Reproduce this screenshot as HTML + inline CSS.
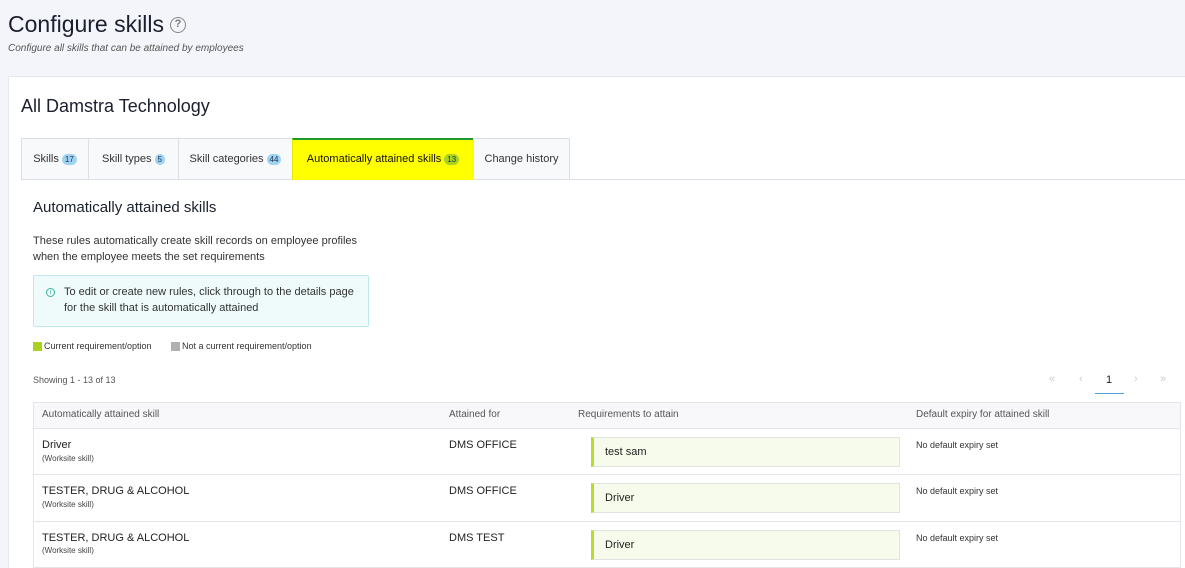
<!DOCTYPE html>
<html style="width:1185px;height:568px;overflow:hidden"><head><style>
*{margin:0;padding:0;box-sizing:border-box}
body{width:1185px;height:568px;overflow:hidden;background:#f4f5fa;font-family:"Liberation Sans",sans-serif;color:#222;position:relative}
.a{position:absolute;white-space:nowrap}
.card{position:absolute;left:8px;top:76px;width:1180px;height:492px;background:#fff;border:1px solid #e6e8ee;border-bottom:none}
.tab{position:absolute;top:138px;height:42px;border:1px solid #dcdfe5;background:#f8f9fb;font-size:11px;color:#333;padding-top:14px;text-align:center}
.b{display:inline-block;background:#9fd3f5;border-radius:7px;font-size:8px;padding:1px 3px;margin-left:3px;color:#234}
.row{position:absolute;left:33px;width:1148px;border:1px solid #e3e5ea;border-top:none}
.req{position:absolute;left:591px;width:309px;height:30px;background:#f7fbeb;border:1px solid #e0e3e0;border-left:3px solid #b5dd2a;font-size:11px;padding:8px 0 0 11px}
.t1{font-size:11px;color:#222}.t2{font-size:8px;color:#444}
</style></head><body>
<div class="a" style="left:8px;top:11px;font-size:23px;color:#1b1f2e">Configure skills</div>
<div class="a" style="left:170px;top:17px;width:16px;height:16px;border:1.5px solid #888;border-radius:50%;font-size:11px;color:#777;text-align:center;line-height:13px;font-weight:bold">?</div>
<div class="a" style="left:8px;top:43px;font-size:10px;font-style:italic;color:#555">Configure all skills that can be attained by employees</div>
<div class="card"></div>
<div class="a" style="left:21px;top:96px;font-size:18px;color:#1b1f2e">All Damstra Technology</div>
<div class="a" style="left:21px;top:179px;width:1170px;border-top:1px solid #dcdfe5"></div>
<div class="tab" style="left:21px;width:68px">Skills<span class="b">17</span></div>
<div class="tab" style="left:88px;width:91px">Skill types<span class="b">5</span></div>
<div class="tab" style="left:178px;width:115px">Skill categories<span class="b">44</span></div>
<div class="tab" style="left:292px;width:182px;background:#ffff00;border-color:#e8e800;border-top:2px solid #1a9a2a;border-bottom:none;color:#111;padding-top:13px">Automatically attained skills<span class="b" style="background:#a8d41f">13</span></div>
<div class="tab" style="left:473px;width:97px">Change history</div>
<div class="a" style="left:33px;top:199px;font-size:15px;color:#1b1f2e">Automatically attained skills</div>
<div class="a" style="left:33px;top:233px;font-size:11px;line-height:16px;color:#333">These rules automatically create skill records on employee profiles<br>when the employee meets the set requirements</div>
<div class="a" style="left:33px;top:275px;width:336px;height:52px;background:#effbfa;border:1px solid #bfe9e6;border-radius:2px"></div>
<div class="a" style="left:46px;top:288px;width:9px;height:9px;border:1px solid #3bb3a3;border-radius:50%;font-size:7px;color:#3bb3a3;text-align:center;line-height:8px">i</div>
<div class="a" style="left:64px;top:284px;font-size:11px;line-height:16px;color:#333">To edit or create new rules, click through to the details page<br>for the skill that is automatically attained</div>
<div class="a" style="left:33px;top:342px;width:9px;height:9px;background:#a8d41f"></div>
<div class="a" style="left:44px;top:341px;font-size:9px;color:#333">Current requirement/option</div>
<div class="a" style="left:171px;top:342px;width:9px;height:9px;background:#b0b0b0"></div>
<div class="a" style="left:182px;top:341px;font-size:9px;color:#333">Not a current requirement/option</div>
<div class="a" style="left:33px;top:375px;font-size:9px;color:#555">Showing 1 - 13 of 13</div>
<div class="a" style="left:1049px;top:373px;font-size:11px;color:#ccc">«</div>
<div class="a" style="left:1079px;top:373px;font-size:11px;color:#ccc">‹</div>
<div class="a" style="left:1106px;top:374px;font-size:11px;color:#222">1</div>
<div class="a" style="left:1095px;top:393px;width:29px;border-top:1px solid #4aa3df"></div>
<div class="a" style="left:1134px;top:373px;font-size:11px;color:#ccc">›</div>
<div class="a" style="left:1160px;top:373px;font-size:11px;color:#ccc">»</div>
<div class="row" style="top:402px;height:27px;border-top:1px solid #e3e5ea;background:#f8f8fa"></div>
<div class="a" style="left:42px;top:409px;font-size:10px;color:#555">Automatically attained skill</div>
<div class="a" style="left:449px;top:409px;font-size:10px;color:#555">Attained for</div>
<div class="a" style="left:578px;top:409px;font-size:10px;color:#555">Requirements to attain</div>
<div class="a" style="left:916px;top:409px;font-size:10px;color:#555">Default expiry for attained skill</div>

<div class="row" style="top:429px;height:46px"></div>
<div class="a t1" style="left:42px;top:439px">Driver</div><div class="a t2" style="left:42px;top:454px">(Worksite skill)</div>
<div class="a t1" style="left:449px;top:439px">DMS OFFICE</div>
<div class="req" style="top:437px">test sam</div>
<div class="a" style="left:916px;top:440px;font-size:9px;color:#333">No default expiry set</div>

<div class="row" style="top:475px;height:47px"></div>
<div class="a t1" style="left:42px;top:485px">TESTER, DRUG &amp; ALCOHOL</div><div class="a t2" style="left:42px;top:500px">(Worksite skill)</div>
<div class="a t1" style="left:449px;top:485px">DMS OFFICE</div>
<div class="req" style="top:483px">Driver</div>
<div class="a" style="left:916px;top:486px;font-size:9px;color:#333">No default expiry set</div>

<div class="row" style="top:522px;height:46px"></div>
<div class="a t1" style="left:42px;top:532px">TESTER, DRUG &amp; ALCOHOL</div><div class="a t2" style="left:42px;top:546px">(Worksite skill)</div>
<div class="a t1" style="left:449px;top:532px">DMS TEST</div>
<div class="req" style="top:530px">Driver</div>
<div class="a" style="left:916px;top:533px;font-size:9px;color:#333">No default expiry set</div>
</body></html>
